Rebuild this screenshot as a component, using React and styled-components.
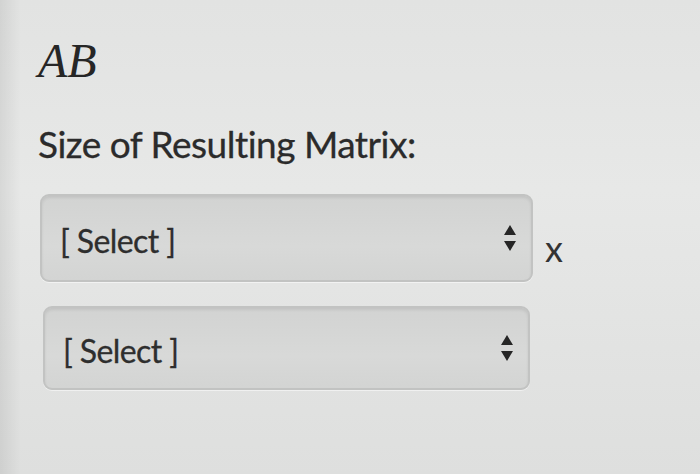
import React from 'react';
import styled, { createGlobalStyle } from 'styled-components';

const GlobalStyle = createGlobalStyle`
  html, body {
    margin: 0;
    padding: 0;
  }
  body {
    font-family: Lato, "Open Sans", sans-serif;
    color: #2a2a2a;
  }
`;

const Page = styled.div`
  width: 700px;
  height: 474px;
  box-sizing: border-box;
  padding: 33px 0 0 38px;
  overflow: hidden;
  background:
    linear-gradient(90deg, rgba(0, 0, 0, 0.07) 0%, rgba(0, 0, 0, 0) 3%),
    linear-gradient(180deg, #e2e3e2 0%, #e7e8e7 40%, #dedfde 100%);
`;

const Formula = styled.div`
  font-family: "Liberation Serif", "DejaVu Serif", serif;
  font-style: italic;
  font-size: 48px;
  line-height: 56px;
  color: #262626;
`;

const Question = styled.div`
  margin-top: 33px;
  font-size: 37px;
  line-height: 44px;
  letter-spacing: -0.5px;
  color: #2b2b2b;
  -webkit-text-stroke: 0.3px #2b2b2b;
`;

const Fields = styled.div`
  margin-top: 28px;
  display: flex;
  flex-direction: column;
  gap: 24px;
`;

const Row = styled.div`
  display: flex;
  align-items: center;
  gap: 12px;
  padding-left: ${(p) => p.$indent || 0}px;
`;

const SelectBox = styled.div`
  width: ${(p) => p.$width}px;
  height: ${(p) => p.$height}px;
  box-sizing: border-box;
  display: flex;
  align-items: center;
  justify-content: space-between;
  padding: 0 14px 0 18px;
  border: 2px solid #c2c3c2;
  border-radius: 9px;
  background: linear-gradient(180deg, #d2d3d2 0%, #d8d9d8 60%, #d3d4d3 100%);
  box-shadow: inset 0 2px 3px rgba(0, 0, 0, 0.08), 0 1px 0 rgba(255, 255, 255, 0.5);
`;

const Placeholder = styled.span`
  font-size: 32px;
  letter-spacing: -0.6px;
  color: #2e2e2e;
  -webkit-text-stroke: 0.3px #2e2e2e;
  margin-top: ${(p) => p.$shift || 0}px;
`;

const Times = styled.span`
  font-size: 36px;
  color: #333;
  margin-top: 20px;
`;

const Updown = () => (
  <svg width="14" height="30" viewBox="0 0 14 30">
    <path d="M7 2 L13 12 L1 12 Z" fill="#262626" />
    <path d="M1 18 L13 18 L7 28 Z" fill="#262626" />
  </svg>
);

const Select = ({ width, height, shift }) => (
  <SelectBox $width={width} $height={height}>
    <Placeholder $shift={shift}>[ Select ]</Placeholder>
    <Updown />
  </SelectBox>
);

export default function App() {
  return (
    <Page>
      <GlobalStyle />
      <Formula>AB</Formula>
      <Question>Size of Resulting Matrix:</Question>
      <Fields>
        <Row $indent={2}>
          <Select width={493} height={88} shift={4} />
          <Times>x</Times>
        </Row>
        <Row $indent={5}>
          <Select width={487} height={84} shift={4} />
        </Row>
      </Fields>
    </Page>
  );
}
